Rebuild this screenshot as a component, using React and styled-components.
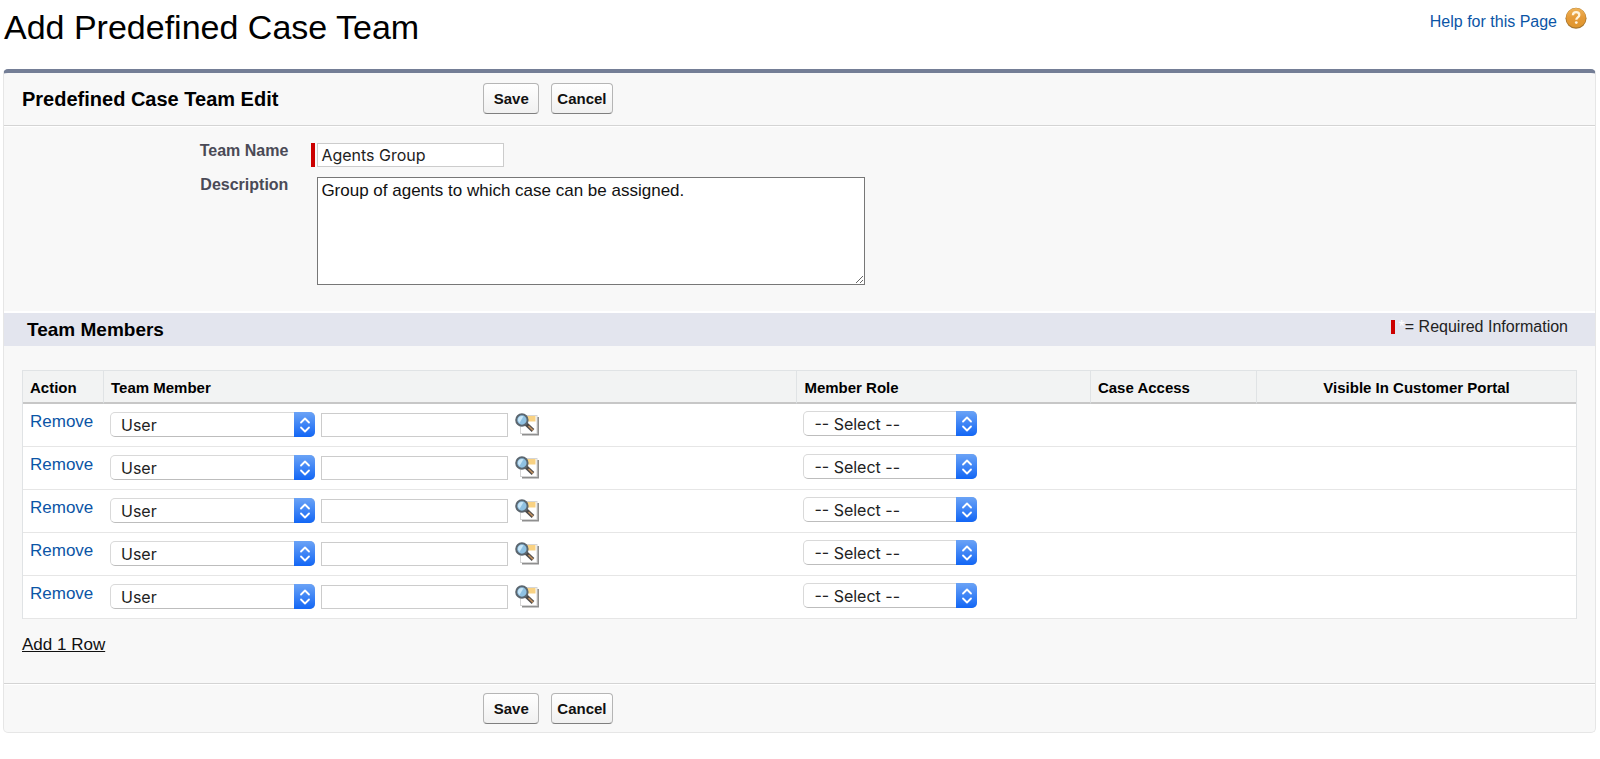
import React, { useState } from "react";
import styled, { createGlobalStyle } from "styled-components";

const columns = [
    { title: "Action", width: "80px" },
    { title: "Team Member" },
    { title: "Member Role", width: "18.9%" },
    { title: "Case Access", width: "10.7%" },
    { title: "Visible In Customer Portal", width: "20.6%", center: true },
];

const HelpIcon = () => (
    <svg width="22" height="22" viewBox="0 0 22 22" aria-hidden="true">
        <defs>
            <linearGradient id="helpFill" x1="0" y1="0" x2="0" y2="1">
                <stop offset="0" stopColor="#efb45a" />
                <stop offset="0.5" stopColor="#e59a38" />
                <stop offset="1" stopColor="#e0962c" />
            </linearGradient>
        </defs>
        <circle cx="11" cy="11.3" r="10.5" fill="#a5742c" />
        <circle cx="11" cy="10.7" r="9.8" fill="url(#helpFill)" />
        <path d="M7.9 8.2c.1-1.9 1.300-3 3.200-3s3.200 1.100 3.200 2.800c0 2.300-3 2.400-3 4.800" fill="none" stroke="#fff3dc" strokeWidth="2.300" />
        <circle cx="11.300" cy="15.600" r="1.400" fill="#fff3dc" />
    </svg>
);

const LookupIcon = () => (
    <svg width="24" height="24" viewBox="0 0 24 24" aria-hidden="true">
        <path d="M7 4h17v18.500H7z" fill="#8f8f8f" />
        <path d="M5 2h17.500v19H5z" fill="#d4d4d4" />
        <path d="M6 3h15.500v17H6z" fill="#fff" />
        <path d="M12 3h8.500v5.500H12z" fill="#f9d283" />
        <path d="M10.500 10.500l7.500 7" stroke="#4d4a48" strokeWidth="3.800" />
        <path d="M13.500 13l4.500 4.300" stroke="#c09060" strokeWidth="1.600" />
        <circle cx="6.900" cy="7" r="5.700" fill="#8fc1e2" stroke="#5b666f" strokeWidth="2" />
        <path d="M3 7.500a4 4 0 0 1 5.500-4.200L4.500 10z" fill="#c9e6f7" />
    </svg>
);

const Dropdown = ({ label, options, wide }) => (
    <SelectBox $wide={wide}>
        <Select aria-label={label}>
            {options.map((e, i) => <option key={i}>{e}</option>)}
        </Select>
        <SelectArrows>
            <svg width="12" height="18" viewBox="0 0 12 18">
                <path d="M2 6.500l4-4 4 4M2 11.500l4 4 4-4" fill="none" stroke="#fff" strokeWidth="1.800" strokeLinecap="round" strokeLinejoin="round" />
            </svg>
        </SelectArrows>
    </SelectBox>
);

const Actions = () => (
    <Buttons>
        <Button type="submit">Save</Button>
        <Button type="button">Cancel</Button>
    </Buttons>
);

const App = () => {

    const [rows, setRows] = useState(5);

    const addRow = (e) => {
        e.preventDefault();
        setRows(rows + 1);
    };

    return (
        <>
            <GlobalStyle />
            <PageHeader>
                <PageTitle>Add Predefined Case Team</PageTitle>
                <HelpLink href="#help">
                    Help for this Page
                    <HelpIcon />
                </HelpLink>
            </PageHeader>
            <Panel onSubmit={(e) => e.preventDefault()}>
                <PanelHeader>
                    <PanelTitle>Predefined Case Team Edit</PanelTitle>
                    <Actions />
                </PanelHeader>
                <Fields>
                    <Label htmlFor="teamName">Team Name</Label>
                    <Field>
                        <RequiredBar />
                        <TextInput id="teamName" defaultValue="Agents Group" required />
                    </Field>
                    <Label htmlFor="description">Description</Label>
                    <Field>
                        <RequiredBar $hidden />
                        <TextArea id="description" defaultValue="Group of agents to which case can be assigned." />
                    </Field>
                </Fields>
                <SectionHeader>
                    <SectionTitle>Team Members</SectionTitle>
                    <Legend>
                        <LegendBar />
                        <LegendStar>*</LegendStar>
                        = Required Information
                    </Legend>
                </SectionHeader>
                <Members>
                    <Table>
                        <thead>
                            <tr>
                                {columns.map((e, i) =>
                                    <HeadCell key={i} $width={e.width} $center={e.center}>{e.title}</HeadCell>
                                )}
                            </tr>
                        </thead>
                        <tbody>
                            {Array.from({ length: rows }, (_, i) =>
                                <tr key={i}>
                                    <Cell><RemoveLink href="#remove">Remove</RemoveLink></Cell>
                                    <Cell>
                                        <MemberPicker>
                                            <Dropdown label="Member type" options={["User"]} wide />
                                            <TextInput aria-label="Team member" />
                                            <LookupButton type="button" aria-label="Lookup"><LookupIcon /></LookupButton>
                                        </MemberPicker>
                                    </Cell>
                                    <Cell><Dropdown label="Member role" options={["-- Select --"]} /></Cell>
                                    <Cell />
                                    <Cell />
                                </tr>
                            )}
                        </tbody>
                    </Table>
                    <AddLink href="#add" onClick={addRow}>Add 1 Row</AddLink>
                </Members>
                <PanelFooter>
                    <span />
                    <Actions />
                </PanelFooter>
            </Panel>
        </>
    )
}

export default App


const GlobalStyle = createGlobalStyle`
    * {
        box-sizing: border-box;
    }

    body {
        margin: 0;
        background: #fff;
        color: #000;
        font-family: "Liberation Sans", Arial, sans-serif;
        font-size: 15px;
    }
`

const PageHeader = styled.header`
    display: flex;
    align-items: flex-start;
    justify-content: space-between;
    padding: 7px 13px 22px 4px;
`

const PageTitle = styled.h1`
    margin: 0;
    font-size: 34px;
    font-weight: normal;
    line-height: 40px;
`

const HelpLink = styled.a`
    display: flex;
    gap: 8px;
    color: #0b55a6;
    font-size: 16px;
    line-height: 30px;
    text-decoration: none;
`

const Panel = styled.form`
    margin: 0 4px 24px 3px;
    border: 1px solid #e6e6e6;
    border-top: 4px solid #747e96;
    border-radius: 5px;
    background: #f8f8f8;
`

const PanelHeader = styled.div`
    display: grid;
    grid-template-columns: 30% 1fr;
    align-items: center;
    padding: 10px 0 11px;
    border-bottom: 1px solid #d4d4d4;
    box-shadow: 0 1px 0 #fff;
`

const PanelTitle = styled.h2`
    margin: 0;
    padding-left: 18px;
    font-size: 20px;
    line-height: 30px;
`

const PanelFooter = styled.div`
    display: grid;
    grid-template-columns: 30% 1fr;
    padding: 9px 0 8px;
    border-top: 1px solid #d4d4d4;
    box-shadow: inset 0 1px 0 #fff;
`

const Buttons = styled.div`
    display: flex;
    gap: 12px;
    padding-left: 2px;
`

const Button = styled.button`
    height: 31px;
    min-width: 56px;
    padding: 0 5px;
    border: 1px solid #b5b5b5;
    border-bottom-color: #7f7f7f;
    border-radius: 4px;
    background: linear-gradient(#fff, #f0f0f0);
    color: #111;
    font-family: inherit;
    font-size: 15px;
    font-weight: bold;
`

const Fields = styled.div`
    display: grid;
    grid-template-columns: 18% 1fr;
    column-gap: 21px;
    row-gap: 10px;
    padding: 17px 0 26px;
`

const Label = styled.label`
    padding-right: 2px;
    color: #4a4a56;
    font-size: 16px;
    font-weight: bold;
    line-height: 16px;
    text-align: right;
`

const Field = styled.div`
    display: flex;
    gap: 2px;
`

const RequiredBar = styled.span`
    width: 4px;
    background: #c00;
    visibility: ${({ $hidden }) => $hidden ? "hidden" : "visible"};
`

const TextInput = styled.input`
    width: 187px;
    height: 24px;
    padding: 0 3px;
    border: 1px solid #ccc;
    background: #fff;
    color: #222;
    font-family: Inter, sans-serif;
    font-size: 16px;
`

const TextArea = styled.textarea`
    width: 548px;
    height: 108px;
    padding: 3px;
    border: 1px solid #777;
    color: #111;
    font-family: inherit;
    font-size: 17px;
    line-height: 20px;
`

const SectionHeader = styled.div`
    display: flex;
    justify-content: space-between;
    padding: 0 27px 0 23px;
    border-top: 2px solid #fff;
    background: #e3e5ee;
`

const SectionTitle = styled.h3`
    margin: 0;
    font-size: 19px;
    line-height: 33px;
`

const Legend = styled.div`
    display: flex;
    align-items: center;
    font-size: 16px;
    line-height: 28px;
    height: 28px;
    color: #222;
`

const LegendBar = styled.span`
    width: 4px;
    height: 14px;
    margin-right: 4px;
    background: #c00;
`

const LegendStar = styled.span`
    color: #fff;
`

const Members = styled.div`
    padding: 24px 18px 26px;
`

const Table = styled.table`
    width: 100%;
    margin-bottom: 14px;
    border: 1px solid #e0e3e5;
    border-bottom: 0;
    border-spacing: 0;
    table-layout: fixed;
    background: #fff;
`

const HeadCell = styled.th`
    width: ${({ $width }) => $width || "auto"};
    height: 33px;
    padding: 2px 7px 0;
    border-bottom: 2px solid #c7c7c7;
    background: #f2f3f3;
    font-size: 15px;
    text-align: ${({ $center }) => $center ? "center" : "left"};

    & + & {
        border-left: 1px solid #e0e3e5;
    }
`

const Cell = styled.td`
    height: 43px;
    padding: 7px 7px 0;
    border-bottom: 1px solid #e6e6e6;
    vertical-align: top;
`

const RemoveLink = styled.a`
    display: block;
    color: #0b55a6;
    font-size: 17px;
    line-height: 22px;
    text-decoration: none;
`

const MemberPicker = styled.div`
    display: flex;
    align-items: center;
    gap: 6px;
    padding-top: 1px;
`

const SelectBox = styled.div`
    position: relative;
    width: ${({ $wide }) => $wide ? "205px" : "174px"};
    height: 25px;
`

const Select = styled.select`
    appearance: none;
    width: 100%;
    height: 100%;
    padding: 0 28px 0 10px;
    border: 1px solid #d9d9d9;
    border-bottom-color: #bdbdbd;
    border-radius: 5px;
    background: #fff;
    color: #222;
    font-family: Inter, sans-serif;
    font-size: 16px;
`

const SelectArrows = styled.span`
    position: absolute;
    top: 0;
    right: 0;
    display: flex;
    align-items: center;
    justify-content: center;
    width: 21px;
    height: 100%;
    border-radius: 0 5px 5px 0;
    background: linear-gradient(#6ba3f6, #1266f5);
    pointer-events: none;
`

const LookupButton = styled.button`
    display: flex;
    padding: 0 1px;
    border: 0;
    background: none;
`

const AddLink = styled.a`
    color: #111;
    font-size: 17px;
    line-height: 24px;
`
